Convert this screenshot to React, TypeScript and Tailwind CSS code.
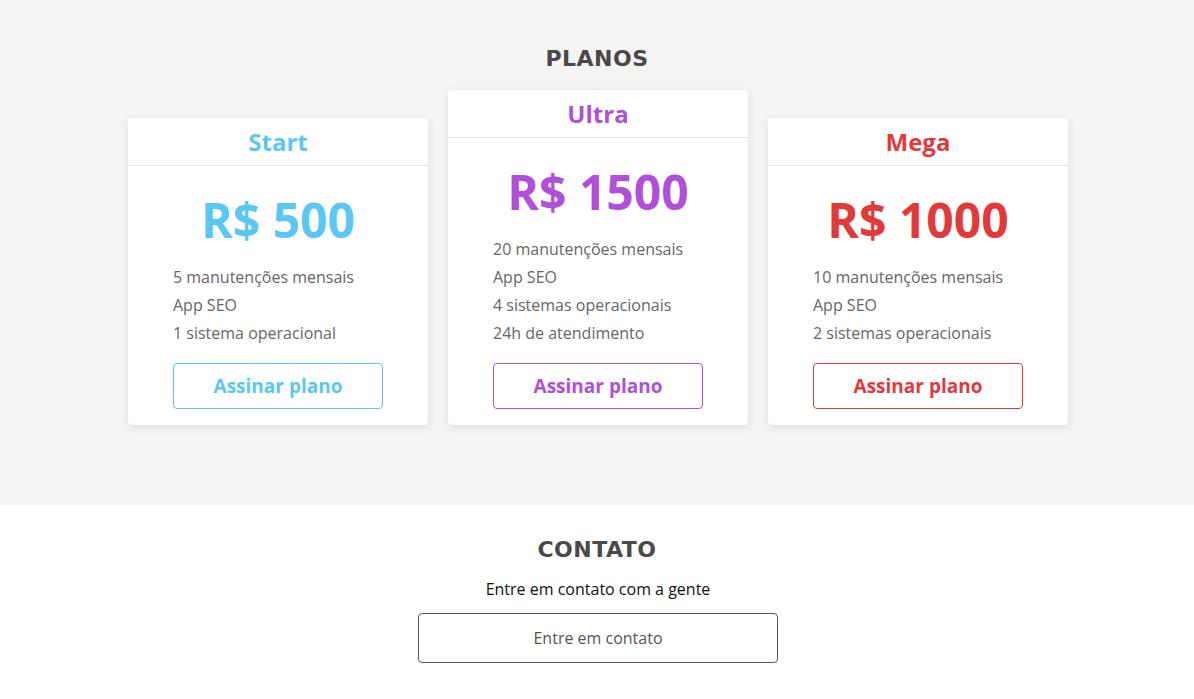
import React from "react";

type Plan = {
  name: string;
  price: string;
  features: string[];
  color: string;
};

const plans: Plan[] = [
  { name: "Start", price: "R$ 500", features: ["5 manutenções mensais", "App SEO", "1 sistema operacional"], color: "start" },
  { name: "Ultra", price: "R$ 1500", features: ["20 manutenções mensais", "App SEO", "4 sistemas operacionais", "24h de atendimento"], color: "ultra" },
  { name: "Mega", price: "R$ 1000", features: ["10 manutenções mensais", "App SEO", "2 sistemas operacionais"], color: "mega" },
];

const textColor: Record<string, string> = {
  start: "text-[#5ac8f0]",
  ultra: "text-[#b04fda]",
  mega: "text-[#e23a3a]",
};
const borderColor: Record<string, string> = {
  start: "border-[#5ac8f0]",
  ultra: "border-[#b04fda]",
  mega: "border-[#e23a3a]",
};

function Card({ plan }: { plan: Plan }) {
  return (
    <div className="w-[300px] bg-white rounded-[4px] shadow-[0_2px_8px_rgba(0,0,0,0.09)] flex flex-col">
      <div className="h-[48px] border-b border-[#e4e4e4] flex items-center justify-center">
        <span className={`text-[24px] font-bold leading-none ${textColor[plan.color]}`}>{plan.name}</span>
      </div>
      <div className="px-[45px] pt-[18px] pb-[16px] flex flex-col">
        <div className={`h-[72px] flex items-center justify-center text-[48px] font-bold leading-none ${textColor[plan.color]}`}>
          {plan.price}
        </div>
        <ul className="mt-[7px] flex flex-col">
          {plan.features.map((f) => (
            <li key={f} className="h-[28px] leading-[28px] text-[16px] text-[#666]">
              {f}
            </li>
          ))}
        </ul>
        <button
          className={`mt-[16px] h-[46px] w-[210px] border rounded-[4px] bg-white text-[19px] font-bold ${textColor[plan.color]} ${borderColor[plan.color]}`}
        >
          Assinar plano
        </button>
      </div>
    </div>
  );
}

export default function App() {
  return (
    <div className="w-full min-h-[699px] bg-white" style={{ fontFamily: '"Open Sans", sans-serif' }}>
      <section className="bg-[#f5f4f2] pt-[41px] pb-[80px] flex flex-col items-center">
        <h2
          className="text-[22px] font-bold leading-[36px] text-[#494949] tracking-[0.5px]"
          style={{ fontFamily: '"DejaVu Sans", sans-serif' }}
        >
          PLANOS
        </h2>
        <div className="mt-[13px] ml-[2px] flex items-end gap-[20px]">
          {plans.map((p) => (
            <Card key={p.name} plan={p} />
          ))}
        </div>
      </section>
      <section className="flex flex-col items-center pt-[27px] pb-[36px]">
        <h2
          className="text-[22px] font-bold leading-[36px] text-[#494949] tracking-[0.5px]"
          style={{ fontFamily: '"DejaVu Sans", sans-serif' }}
        >
          CONTATO
        </h2>
        <p className="mt-[9px] ml-[2px] text-[16px] leading-[24px] text-[#111]">Entre em contato com a gente</p>
        <div className="mt-[12px] ml-[2px] w-[360px] h-[50px] border border-[#555] rounded-[4px] flex items-center justify-center text-[16px] text-[#555]">
          Entre em contato
        </div>
      </section>
    </div>
  );
}
